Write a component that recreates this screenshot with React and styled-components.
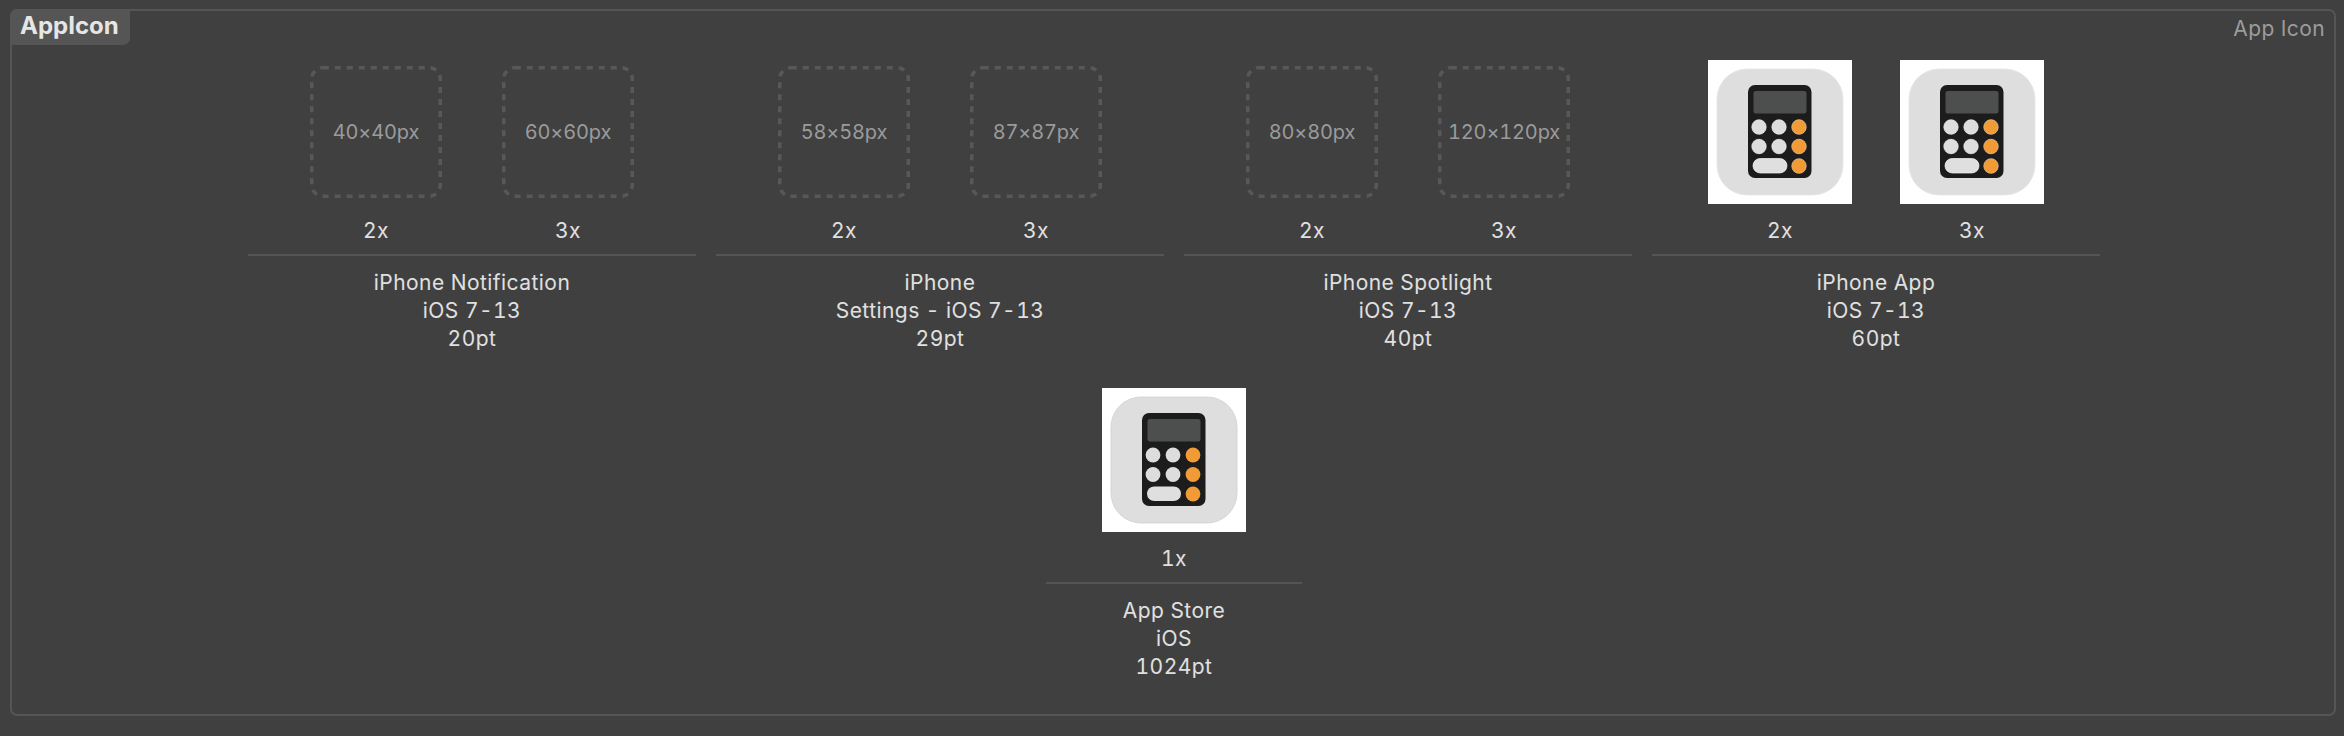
import React from "react";
import styled, { createGlobalStyle } from "styled-components";

const GlobalStyle = createGlobalStyle`
  html, body {
    margin: 0;
    height: 100%;
    background: #404040;
  }
  body {
    font-family: Inter, "Liberation Sans", sans-serif;
    font-variant-numeric: tabular-nums;
    -webkit-font-smoothing: antialiased;
  }
`;

const Page = styled.div`
  padding: 9px 8px 0 10px;
  box-sizing: border-box;
  height: 736px;
  overflow: hidden;
`;

const Frame = styled.div`
  position: relative;
  box-sizing: border-box;
  border: 2px solid #555555;
  border-radius: 7px;
  padding: 49px 0 33px 2px;
  display: flex;
  flex-direction: column;
  gap: 35px;
`;

const NameTag = styled.div`
  position: absolute;
  top: -2px;
  left: -2px;
  width: 120px;
  height: 36px;
  box-sizing: border-box;
  padding-left: 10px;
  background: #555555;
  border-radius: 7px 0 7px 0;
  color: #e6e6e6;
  font-size: 24px;
  font-weight: 700;
  line-height: 33px;
`;

const TypeLabel = styled.div`
  position: absolute;
  top: 4px;
  right: 9px;
  color: #9c9c9c;
  font-size: 21px;
  line-height: 28px;
  letter-spacing: 0.4px;
`;

const Row = styled.div`
  display: flex;
  justify-content: center;
  gap: 20px;
`;

const Group = styled.div`
  width: ${(props) => props.$width}px;
  display: flex;
  flex-direction: column;
  align-items: stretch;
`;

const Slots = styled.div`
  display: flex;
  justify-content: center;
`;

const Slot = styled.div`
  width: 192px;
  display: flex;
  flex-direction: column;
  align-items: center;
`;

const Well = styled.div`
  width: 144px;
  height: 144px;
  display: flex;
  align-items: center;
  justify-content: center;
`;

const Placeholder = styled.div`
  position: relative;
  width: 132px;
  height: 132px;
  display: flex;
  align-items: center;
  justify-content: center;
  color: #9b9b9b;
  font-size: 20px;
  letter-spacing: -0.15px;
`;

const DashedOutline = styled.svg`
  position: absolute;
  inset: 0;
  width: 132px;
  height: 132px;
`;

const Scale = styled.div`
  margin-top: 13px;
  color: #e0e0e0;
  font-size: 21px;
  line-height: 28px;
  letter-spacing: 0.5px;
`;

const Divider = styled.div`
  height: 2px;
  margin-top: 9px;
  background: #555555;
`;

const Caption = styled.div`
  margin-top: 13px;
  color: #e0e0e0;
  font-size: 21px;
  line-height: 28px;
  letter-spacing: 0.45px;
  text-align: center;
`;

const IconImage = styled.svg`
  display: block;
  width: 144px;
  height: 144px;
`;

function CalculatorIcon({ soft, uid }) {
  const keys = [
    [51, 67, "#dcdddc"],
    [71, 67, "#dcdddc"],
    [91, 67, "#f09b34"],
    [51, 86.5, "#dcdddc"],
    [71, 86.5, "#dcdddc"],
    [91, 86.5, "#f09b34"],
    [91, 106, "#f09b34"],
  ];
  return (
    <IconImage viewBox="0 0 144 144">
      <defs>
        <filter id={uid}>
          <feGaussianBlur stdDeviation={soft ? 0.6 : 0.3} />
        </filter>
      </defs>
      <rect width="144" height="144" fill="#ffffff" />
      <g filter={`url(#${uid})`}>
        <rect
          x="9"
          y="9"
          width="126"
          height="126"
          rx="30"
          fill="#dddedd"
          stroke={soft ? "#e6e6e6" : "#cfd0cf"}
          strokeWidth="0.8"
        />
        <rect x="40" y="25" width="63.5" height="93" rx="7" fill="#1c1c1c" />
        <rect x="45.5" y="31" width="53" height="22.5" rx="2.5" fill="#4e504f" />
        {keys.map(([cx, cy, fill]) => (
          <circle
            key={`${cx}-${cy}`}
            cx={cx}
            cy={cy}
            r="7.4"
            fill={fill}
            stroke={soft ? "#f4f4f4" : "none"}
            strokeOpacity="0.5"
            strokeWidth="0.7"
          />
        ))}
        <rect
          x="45"
          y="98.5"
          width="34"
          height="14.5"
          rx="7.25"
          fill="#dedfde"
          stroke={soft ? "#f8f8f8" : "none"}
          strokeWidth="0.7"
        />
      </g>
    </IconImage>
  );
}

const ICON_SETS = [
  {
    lines: ["iPhone Notification", "iOS 7-13", "20pt"],
    slots: [
      { scale: "2x", size: "40×40px" },
      { scale: "3x", size: "60×60px" },
    ],
  },
  {
    lines: ["iPhone", "Settings - iOS 7-13", "29pt"],
    slots: [
      { scale: "2x", size: "58×58px" },
      { scale: "3x", size: "87×87px" },
    ],
  },
  {
    lines: ["iPhone Spotlight", "iOS 7-13", "40pt"],
    slots: [
      { scale: "2x", size: "80×80px" },
      { scale: "3x", size: "120×120px" },
    ],
  },
  {
    lines: ["iPhone App", "iOS 7-13", "60pt"],
    slots: [
      { scale: "2x", icon: "soft" },
      { scale: "3x", icon: "soft" },
    ],
  },
];

const APP_STORE_SET = {
  lines: ["App Store", "iOS", "1024pt"],
  slots: [{ scale: "1x", icon: "sharp" }],
};

function IconSet({ set, width }) {
  return (
    <Group $width={width}>
      <Slots>
        {set.slots.map((slot) => (
          <Slot key={slot.scale}>
            <Well>
              {slot.icon ? (
                <CalculatorIcon
                  soft={slot.icon === "soft"}
                  uid={`blur-${set.lines[0].replace(/\s/g, "")}-${slot.scale}`}
                />
              ) : (
                <Placeholder>
                  <DashedOutline viewBox="0 0 132 132">
                    <rect
                      x="1.75"
                      y="1.75"
                      width="128.5"
                      height="128.5"
                      rx="11"
                      fill="none"
                      stroke="#585858"
                      strokeWidth="3.5"
                      strokeDasharray="6 6"
                    />
                  </DashedOutline>
                  {slot.size}
                </Placeholder>
              )}
            </Well>
            <Scale>{slot.scale}</Scale>
          </Slot>
        ))}
      </Slots>
      <Divider />
      <Caption>
        {set.lines.map((line) => (
          <div key={line}>{line}</div>
        ))}
      </Caption>
    </Group>
  );
}

export default function App() {
  return (
    <Page>
      <GlobalStyle />
      <Frame>
        <NameTag>AppIcon</NameTag>
        <TypeLabel>App Icon</TypeLabel>
        <Row>
          {ICON_SETS.map((set) => (
            <IconSet key={set.lines[0]} set={set} width={448} />
          ))}
        </Row>
        <Row>
          <IconSet set={APP_STORE_SET} width={256} />
        </Row>
      </Frame>
    </Page>
  );
}
